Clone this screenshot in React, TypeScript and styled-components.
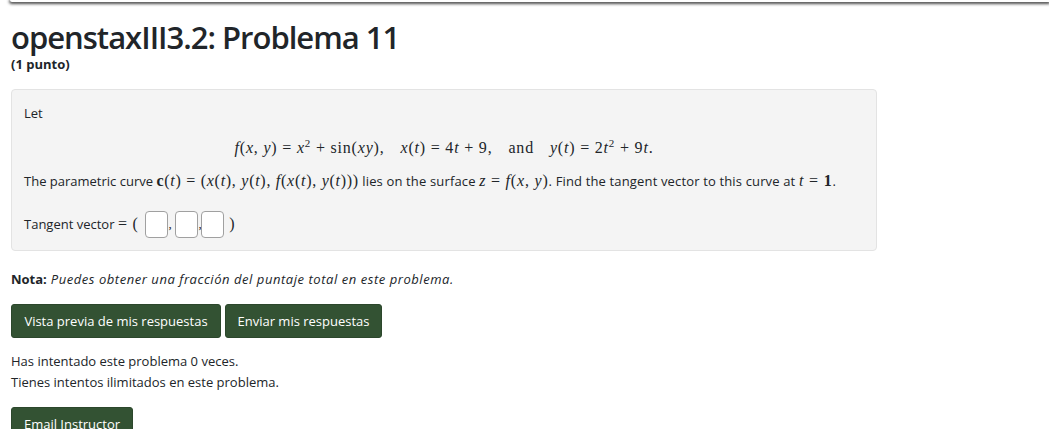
import React from 'react';
import styled, { createGlobalStyle } from 'styled-components';

const GlobalStyle = createGlobalStyle`
  html, body {
    margin: 0;
    padding: 0;
    height: 429px;
    overflow: hidden;
    background: #fff;
  }
  body {
    font-family: "Open Sans", "Noto Sans", sans-serif;
    font-size: 13px;
    color: #212529;
  }
`;

const Page = styled.div`
  display: flex;
  flex-direction: column;
  align-items: flex-start;
  padding: 0 11px;
`;

const TopBar = styled.div`
  align-self: stretch;
  height: 2px;
  margin: 0 -11px 0 -1px;
  border-bottom-left-radius: 3px;
  background: #fff;
  box-shadow: 0 1px 3px 1px rgba(0, 0, 0, 0.7);
`;

const Title = styled.h2`
  margin: 16px 0 0;
  font-size: 31px;
  line-height: 38px;
  font-weight: 550;
  letter-spacing: -1px;
`;

const Points = styled.div`
  line-height: 16px;
  font-weight: 700;
`;

const ProblemPanel = styled.div`
  box-sizing: border-box;
  width: 866px;
  height: 162px;
  margin-top: 17px;
  padding: 13px 12px 0;
  background: #f4f4f4;
  border: 1px solid #e3e3e3;
  border-radius: 4px;
`;

const Line = styled.p`
  margin: 0;
  line-height: 20px;
`;

const Roomy = styled.span`
  letter-spacing: 0.15px;
`;

const DisplayEquation = styled.div`
  margin: 15px 0 13px;
  text-align: center;
  line-height: 20px;
  white-space: nowrap;
`;

const MathText = styled.span<{ $spacing?: number }>`
  font-family: "Liberation Serif", serif;
  font-size: 16px;
  letter-spacing: ${(p) => p.$spacing ?? 0.8}px;
`;

const OpenParen = styled(MathText)`
  padding-right: 2px;
`;

const Var = styled.i``;

const Power = styled.sup`
  font-size: 11px;
  vertical-align: 6px;
  line-height: 0;
`;

const Gap = styled.span`
  display: inline-block;
  width: 16px;
`;

const AnswerLine = styled.div`
  display: flex;
  align-items: center;
  margin-top: 19px;
  height: 28px;
  white-space: pre;
`;

const AnswerInput = styled.input`
  box-sizing: border-box;
  width: 23px;
  height: 27px;
  padding: 0;
  background: #fff;
  border: 1px solid #a0a0a0;
  border-radius: 4px;
`;

const Comma = styled.span<{ $wide?: boolean }>`
  width: ${(p) => (p.$wide ? '7px' : '3px')};
  font-family: "Liberation Serif", serif;
  font-size: 13px;
  line-height: 34px;
`;

const Note = styled.p`
  margin: 19px 0 0;
  line-height: 18px;
  letter-spacing: 0.55px;
`;

const NoteLabel = styled.b`
  letter-spacing: 0;
`;

const ButtonRow = styled.div`
  display: flex;
  gap: 4px;
  margin-top: 16px;
`;

const Button = styled.button<{ $width: number }>`
  box-sizing: border-box;
  width: ${(p) => p.$width}px;
  height: 34px;
  padding: 0;
  font: inherit;
  color: #fff;
  background: #335233;
  border: 1px solid #2c472c;
  border-radius: 3px;
`;

const Attempts = styled.div`
  margin-top: 13px;
  line-height: 21px;
`;

const EmailRow = styled.div`
  margin-top: 14px;
`;

export default function App() {
  return (
    <>
      <GlobalStyle />
      <Page>
        <TopBar />
        <Title>openstaxIII3.2: Problema 11</Title>
        <Points>(1 punto)</Points>

        <ProblemPanel>
          <Line>Let</Line>
          <DisplayEquation>
            <MathText>
              <Var>f</Var>(<Var>x</Var>, <Var>y</Var>) = <Var>x</Var>
              <Power>2</Power> + sin(<Var>xy</Var>),
              <Gap />
              <Var>x</Var>(<Var>t</Var>) = 4<Var>t</Var> + 9,
              <Gap />
              and
              <Gap />
              <Var>y</Var>(<Var>t</Var>) = 2<Var>t</Var>
              <Power>2</Power> + 9<Var>t</Var>.
            </MathText>
          </DisplayEquation>
          <Line>
            The parametric curve{' '}
            <MathText $spacing={0.72}>
              <b>c</b>(<Var>t</Var>) = (<Var>x</Var>(<Var>t</Var>), <Var>y</Var>(<Var>t</Var>), <Var>f</Var>(<Var>x</Var>(<Var>t</Var>), <Var>y</Var>(<Var>t</Var>)))
            </MathText>{' '}
            <Roomy>lies on the surface </Roomy>
            <MathText>
              <Var>z</Var> = <Var>f</Var>(<Var>x</Var>, <Var>y</Var>)
            </MathText>
            <Roomy>. Find the tangent vector to this curve at </Roomy>
            <MathText>
              <Var>t</Var> = <b>1</b>
            </MathText>
            .
          </Line>
          <AnswerLine>
            Tangent vector <OpenParen>= ( </OpenParen>
            <AnswerInput aria-label="x" />
            <Comma $wide>,</Comma>
            <AnswerInput aria-label="y" />
            <Comma>,</Comma>
            <AnswerInput aria-label="z" />
            <MathText> )</MathText>
          </AnswerLine>
        </ProblemPanel>

        <Note>
          <NoteLabel>Nota:</NoteLabel> <i>Puedes obtener una fracción del puntaje total en este problema.</i>
        </Note>

        <ButtonRow>
          <Button $width={210}>Vista previa de mis respuestas</Button>
          <Button $width={157}>Enviar mis respuestas</Button>
        </ButtonRow>

        <Attempts>
          Has intentado este problema 0 veces.
          <br />
          Tienes intentos ilimitados en este problema.
        </Attempts>

        <EmailRow>
          <Button $width={122}>Email Instructor</Button>
        </EmailRow>
      </Page>
    </>
  );
}
